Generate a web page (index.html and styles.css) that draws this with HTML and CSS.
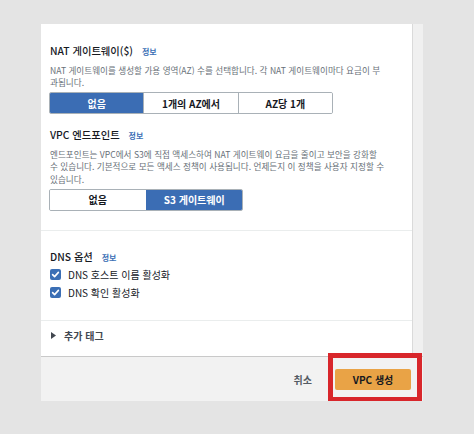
FILE: index.html
```html
<!DOCTYPE html>
<html lang="ko">
<head>
<meta charset="utf-8">
<link rel="stylesheet" href="styles.css">
</head>
<body>
<div class="window">
  <div class="body-row">
    <div class="panel">
      <div class="section first">
        <div class="field">
          <div class="label">NAT 게이트웨이($) <span class="info">정보</span></div>
          <div class="desc">NAT 게이트웨이를 생성할 가용 영역(AZ) 수를 선택합니다. 각 NAT 게이트웨이마다 요금이 부<br>과됩니다.</div>
          <div class="segmented three">
            <div class="seg active">없음</div>
            <div class="seg">1개의 AZ에서</div>
            <div class="seg">AZ당 1개</div>
          </div>
        </div>
        <div class="field second">
          <div class="label">VPC 엔드포인트 <span class="info">정보</span></div>
          <div class="desc">엔드포인트는 VPC에서 S3에 직접 액세스하여 NAT 게이트웨이 요금을 줄이고 보안을 강화할<br>수 있습니다. 기본적으로 모든 액세스 정책이 사용됩니다. 언제든지 이 정책을 사용자 지정할 수<br>있습니다.</div>
          <div class="segmented two">
            <div class="seg">없음</div>
            <div class="seg active">S3 게이트웨이</div>
          </div>
        </div>
      </div>
      <div class="section dns">
        <div class="label">DNS 옵션 <span class="info">정보</span></div>
        <label class="check-row first-check"><span class="box"><svg viewBox="0 0 11 11" width="11" height="11"><path d="M2.6 5.6 L4.6 7.6 L8.4 3.4" fill="none" stroke="#fff" stroke-width="1.6" stroke-linecap="round" stroke-linejoin="round"/></svg></span>DNS 호스트 이름 활성화</label>
        <label class="check-row"><span class="box"><svg viewBox="0 0 11 11" width="11" height="11"><path d="M2.6 5.6 L4.6 7.6 L8.4 3.4" fill="none" stroke="#fff" stroke-width="1.6" stroke-linecap="round" stroke-linejoin="round"/></svg></span>DNS 확인 활성화</label>
      </div>
      <div class="section tags">
        <div class="expander"><svg class="caret" viewBox="0 0 5 7" width="5" height="7"><polygon points="0,0 5,3.5 0,7" fill="#414750"/></svg>추가 태그</div>
      </div>
    </div>
    <div class="scrollbar"></div>
  </div>
  <div class="footer">
    <span class="cancel">취소</span>
    <span class="primary">VPC 생성</span>
  </div>
  <div class="highlight"></div>
</div>
</body>
</html>
```
FILE: styles.css
```css
html, body {
  margin: 0;
  padding: 0;
  background: #e4e4e4;
  font-family: "Noto Sans CJK KR", "Noto Sans", sans-serif;
  color: #16191f;
}

.window {
  margin: 24px 0 0 41px;
  width: 382px;
  position: relative;
}

.body-row {
  display: flex;
  height: 332px;
}

.panel {
  width: 371px;
  background: #ffffff;
}

.scrollbar {
  width: 11px;
  background: #f0f0f0;
  border-left: 1px solid #dadada;
  box-sizing: border-box;
}

.section {
  padding-left: 8px;
  border-bottom: 1px solid #eaeded;
}

.section.first {
  padding-top: 20px;
  padding-bottom: 19.5px;
}

.field.second {
  margin-top: 14px;
}

.label {
  font-size: 10.3px;
  line-height: 14px;
  font-weight: 500;
  padding-left: 1px;
}

.info {
  font-size: 8px;
  font-weight: 700;
  color: #3b6fb5;
  margin-left: 6px;
}

.desc {
  margin-top: 4.5px;
  font-size: 8.6px;
  line-height: 12.5px;
  color: #687078;
  padding-left: 1px;
  white-space: nowrap;
}

.segmented {
  margin-top: 3.5px;
  display: flex;
  height: 22px;
  box-sizing: border-box;
  border: 1px solid #a9b1b7;
  border-radius: 2px;
  overflow: hidden;
}

.segmented.three {
  width: 284px;
}

.segmented.two {
  width: 194px;
}

.seg {
  flex: 1;
  display: flex;
  align-items: center;
  justify-content: center;
  font-size: 10px;
  font-weight: 700;
  color: #16191f;
  background: #ffffff;
}

.seg + .seg {
  border-left: 1px solid #a9b1b7;
}

.seg.active {
  background: #3b6db4;
  color: #ffffff;
  border-color: #3b6db4;
}

.section.dns {
  padding-top: 18.5px;
  padding-bottom: 18.7px;
}

.check-row {
  display: flex;
  align-items: center;
  height: 17.5px;
  font-size: 10px;
  color: #16191f;
}

.check-row.first-check {
  margin-top: 1.5px;
}

.box {
  width: 11px;
  height: 11px;
  border-radius: 2px;
  background: #3b6fb5;
  display: flex;
  margin-left: 1px;
  margin-right: 7px;
}

.section.tags {
  padding-top: 8px;
  border-bottom: none;
}

.expander {
  display: flex;
  align-items: center;
  height: 14px;
  font-size: 10px;
  font-weight: 700;
  color: #414750;
}

.caret {
  margin-left: 2px;
  margin-right: 8px;
}

.footer {
  height: 45px;
  box-sizing: border-box;
  border-top: 1px solid #c9c9c9;
  background: #f2f2f2;
  display: flex;
  justify-content: flex-end;
  align-items: center;
  gap: 23px;
  padding-right: 12px;
}

.cancel {
  font-size: 10px;
  font-weight: 700;
  color: #545b64;
}

.primary {
  width: 76px;
  height: 21px;
  display: flex;
  align-items: center;
  justify-content: center;
  background: #e9a346;
  border-radius: 2px;
  font-size: 10px;
  font-weight: 700;
  color: #16191f;
}

.highlight {
  position: absolute;
  left: 287px;
  top: 329px;
  width: 94px;
  height: 49px;
  box-sizing: border-box;
  border: 5px solid #d8262b;
}
```
